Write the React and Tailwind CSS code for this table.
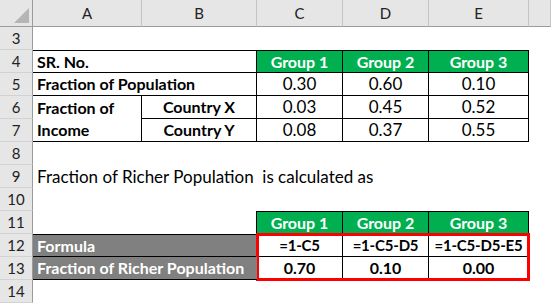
import React from "react";
import clsx from "clsx";

const columns = ["A", "B", "C", "D", "E", ""];

const population = ["0.30", "0.60", "0.10"];
const income = {
  "Country X": ["0.03", "0.45", "0.52"],
  "Country Y": ["0.08", "0.37", "0.55"],
};
const formulas = ["=1-C5", "=1-C5-D5", "=1-C5-D5-E5"];
const results = ["0.70", "0.10", "0.00"];

function Cell({ className, children }) {
  return (
    <div className={clsx("flex items-center whitespace-nowrap", className)}>
      {children}
    </div>
  );
}

function RowHead({ n }) {
  return (
    <Cell className="justify-center bg-[#e6e6e6] border-r border-b border-r-[#9b9b9b] border-b-[#d2d2d2] text-[15px] text-[#222]">
      {n}
    </Cell>
  );
}

function Blank({ className }) {
  return <div className={className} />;
}

export default function App() {
  return (
    <div className="w-[551px] h-[303px] overflow-hidden bg-white font-[Lato,sans-serif] text-[17px] text-black">
      <div className="grid grid-cols-[33px_109px_115px_86px_86px_100px_22px] grid-rows-[27px_repeat(12,23px)]">
        {/* column headers */}
        <div className="flex items-end justify-end bg-[#e6e6e6] border-r border-b border-r-[#9b9b9b] border-b-[#9b9b9b] pr-[3px] pb-[3px]">
          <svg width="15" height="15" viewBox="0 0 15 15">
            <polygon points="15,0 15,15 0,15" fill="#b5b5b5" />
          </svg>
        </div>
        {columns.map((c, i) => (
          <Cell
            key={i}
            className="justify-center bg-[#e6e6e6] border-r border-b border-r-[#c4c4c4] border-b-[#9b9b9b] text-[15px] text-[#222]"
          >
            {c}
          </Cell>
        ))}

        {/* row 3 */}
        <RowHead n={3} />
        <Blank className="col-span-6" />

        {/* row 4 */}
        <RowHead n={4} />
        <Cell className="col-span-2 pl-1 text-[16px] font-bold border-t border-b border-r border-black">
          SR. No.
        </Cell>
        {["Group 1", "Group 2", "Group 3"].map((g) => (
          <Cell
            key={g}
            className="justify-center bg-[#00b050] text-white text-[16px] font-bold border-t border-b border-r border-black"
          >
            {g}
          </Cell>
        ))}
        <Blank />

        {/* row 5 */}
        <RowHead n={5} />
        <Cell className="col-span-2 pl-1 text-[16px] font-bold border-b border-r border-black">
          Fraction of Population
        </Cell>
        {population.map((v, i) => (
          <Cell key={i} className="justify-center border-b border-r border-black">
            {v}
          </Cell>
        ))}
        <Blank />

        {/* rows 6-7 */}
        <RowHead n={6} />
        <div className="row-span-2 flex flex-col pl-1 text-[16px] font-bold border-b border-r border-black">
          <span className="h-[23px] flex items-center">Fraction of</span>
          <span className="h-[22px] flex items-center">Income</span>
        </div>
        {Object.entries(income).map(([country, vals], r) => (
          <React.Fragment key={country}>
            {r === 1 && <RowHead n={7} />}
            <Cell className="justify-center text-[16px] font-bold border-b border-r border-black">
              {country}
            </Cell>
            {vals.map((v, i) => (
              <Cell key={i} className="justify-center border-b border-r border-black">
                {v}
              </Cell>
            ))}
            <Blank />
          </React.Fragment>
        ))}

        {/* row 8 */}
        <RowHead n={8} />
        <Blank className="col-span-6" />

        {/* row 9 */}
        <RowHead n={9} />
        <Cell className="col-span-6 pl-1">
          Fraction of Richer Population&nbsp; is calculated as
        </Cell>

        {/* row 10 */}
        <RowHead n={10} />
        <Blank className="col-span-6" />

        {/* row 11 */}
        <RowHead n={11} />
        <Blank className="col-span-2 border-r border-black" />
        {["Group 1", "Group 2", "Group 3"].map((g) => (
          <Cell
            key={g}
            className="justify-center bg-[#00b050] text-white text-[16px] font-bold border-t border-r border-black"
          >
            {g}
          </Cell>
        ))}
        <Blank />

        {/* rows 12-13 */}
        <RowHead n={12} />
        <Cell className="col-span-2 pl-1 bg-[#808080] text-white text-[16px] font-bold border-t border-b border-black">
          Formula
        </Cell>
        <div className="col-span-3 row-span-2 grid grid-cols-[86px_86px_100px] grid-rows-[23px_23px] font-bold outline-3 outline-[#ff0000] -outline-offset-2">
          {formulas.map((f) => (
            <Cell key={f} className="justify-center text-[15px] tracking-[-0.2px] border-t border-b border-r border-black">
              {f}
            </Cell>
          ))}
          {results.map((v, i) => (
            <Cell key={i} className="justify-center text-[16px] border-b border-r border-black">
              {v}
            </Cell>
          ))}
        </div>
        <Blank />
        <RowHead n={13} />
        <Cell className="col-span-2 pl-1 bg-[#808080] text-white text-[16px] font-bold border-b border-black">
          Fraction of Richer Population
        </Cell>
        <Blank />

        {/* row 14 */}
        <RowHead n={14} />
        <Blank className="col-span-6" />
      </div>
    </div>
  );
}
